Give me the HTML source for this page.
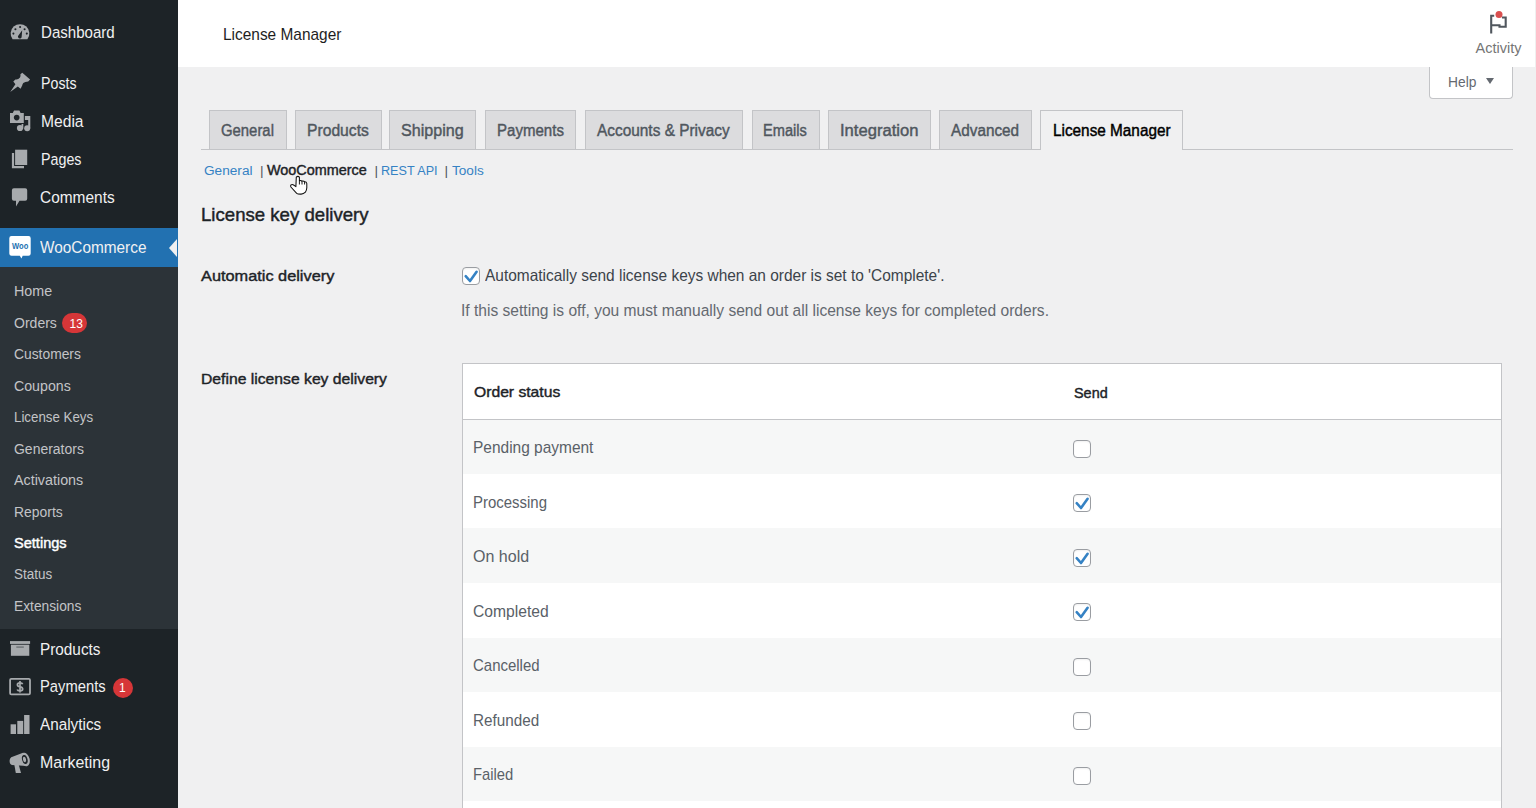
<!DOCTYPE html>
<html><head><meta charset="utf-8"><title>License Manager</title>
<style>
html,body{margin:0;padding:0;width:1536px;height:808px;overflow:hidden;background:#f0f0f1;position:relative;font-family:"Liberation Sans",sans-serif}
.t{position:absolute;line-height:1;white-space:nowrap}
.tab{position:absolute;border:1px solid #c3c4c7;border-bottom:none}
.cb{position:absolute;width:16px;height:16px;border:1px solid #9a9da2;border-radius:4px;box-shadow:inset 0 1px 2px rgba(0,0,0,.06)}
</style></head><body>
<div style="position:absolute;left:0;top:0;width:178px;height:808px;background:#1d2327"></div>
<div style="position:absolute;left:0;top:267px;width:178px;height:362px;background:#2c3338"></div>
<div style="position:absolute;left:0;top:228px;width:178px;height:39px;background:#2271b1"></div>
<div style="position:absolute;left:169.2px;top:238.8px;width:0;height:0;border-top:9.5px solid transparent;border-bottom:9.5px solid transparent;border-right:8.8px solid #f0f0f1"></div>
<div class="t" style="left:41.10px;top:25.45px;font-size:15.3px;color:#f0f0f1;transform:scale(0.9853,1.08);transform-origin:0 12.95px;">Dashboard</div>
<div class="t" style="left:40.60px;top:75.75px;font-size:15.3px;color:#f0f0f1;transform:scale(0.9289,1.08);transform-origin:0 12.95px;">Posts</div>
<div class="t" style="left:40.50px;top:113.85px;font-size:15.3px;color:#f0f0f1;transform:scale(1.0214,1.08);transform-origin:0 12.95px;">Media</div>
<div class="t" style="left:40.50px;top:151.55px;font-size:15.3px;color:#f0f0f1;transform:scale(0.9326,1.08);transform-origin:0 12.95px;">Pages</div>
<div class="t" style="left:40.30px;top:189.55px;font-size:15.3px;color:#f0f0f1;transform:scale(1.0095,1.08);transform-origin:0 12.95px;">Comments</div>
<div class="t" style="left:40.30px;top:240.05px;font-size:15.3px;color:#f0f0f1;transform:scale(1.0047,1.08);transform-origin:0 12.95px;">WooCommerce</div>
<div class="t" style="left:40.40px;top:641.55px;font-size:15.3px;color:#f0f0f1;transform:scale(1.0017,1.08);transform-origin:0 12.95px;">Products</div>
<div class="t" style="left:40.40px;top:679.25px;font-size:15.3px;color:#f0f0f1;transform:scale(0.9662,1.08);transform-origin:0 12.95px;">Payments</div>
<div class="t" style="left:40.00px;top:717.35px;font-size:15.3px;color:#f0f0f1;transform:scale(1.0000,1.08);transform-origin:0 12.95px;">Analytics</div>
<div class="t" style="left:40.40px;top:755.35px;font-size:15.3px;color:#f0f0f1;transform:scale(1.0433,1.08);transform-origin:0 12.95px;">Marketing</div>
<div class="t" style="left:13.60px;top:285.42px;font-size:13.8px;color:#c3c4c7;transform:scale(1.0351,1.08);transform-origin:0 11.68px;">Home</div>
<div class="t" style="left:13.60px;top:316.87px;font-size:13.8px;color:#c3c4c7;transform:scale(1.0167,1.08);transform-origin:0 11.68px;">Orders</div>
<div class="t" style="left:13.60px;top:348.32px;font-size:13.8px;color:#c3c4c7;transform:scale(1.0030,1.08);transform-origin:0 11.68px;">Customers</div>
<div class="t" style="left:13.60px;top:379.77px;font-size:13.8px;color:#c3c4c7;transform:scale(1.0273,1.08);transform-origin:0 11.68px;">Coupons</div>
<div class="t" style="left:13.60px;top:411.22px;font-size:13.8px;color:#c3c4c7;transform:scale(0.9646,1.08);transform-origin:0 11.68px;">License Keys</div>
<div class="t" style="left:13.60px;top:442.67px;font-size:13.8px;color:#c3c4c7;transform:scale(1.0130,1.08);transform-origin:0 11.68px;">Generators</div>
<div class="t" style="left:13.60px;top:474.12px;font-size:13.8px;color:#c3c4c7;transform:scale(1.0373,1.08);transform-origin:0 11.68px;">Activations</div>
<div class="t" style="left:13.60px;top:505.57px;font-size:13.8px;color:#c3c4c7;transform:scale(1.0083,1.08);transform-origin:0 11.68px;">Reports</div>
<div class="t" style="left:13.60px;top:537.10px;font-size:13.7px;color:#ffffff;-webkit-text-stroke:0.4px currentColor;transform:scale(1.0640,1.08);transform-origin:0 11.60px;">Settings</div>
<div class="t" style="left:13.60px;top:568.47px;font-size:13.8px;color:#c3c4c7;transform:scale(0.9769,1.08);transform-origin:0 11.68px;">Status</div>
<div class="t" style="left:13.60px;top:599.92px;font-size:13.8px;color:#c3c4c7;transform:scale(0.9985,1.08);transform-origin:0 11.68px;">Extensions</div>
<div style="position:absolute;left:62px;top:313px;width:25px;height:20px;border-radius:10px;background:#d63638"></div>
<div class="t" style="left:69.50px;top:317.84px;font-size:12px;color:#fff;transform:scale(1.0000,1.08);transform-origin:0 10.16px;">13</div>
<div style="position:absolute;left:112.5px;top:678px;width:20px;height:20px;border-radius:10px;background:#d63638"></div>
<div class="t" style="left:119.00px;top:682.34px;font-size:12px;color:#fff;transform:scale(1.0000,1.08);transform-origin:0 10.16px;">1</div>

<svg style="position:absolute;left:0;top:0" width="178" height="808" viewBox="0 0 178 808">
 <!-- dashboard -->
 <path d="M12.6 39.2 A9.35 9.35 0 1 1 27.4 39.2 Z" fill="#a7aaad"/>
 <g fill="#1d2327"><circle cx="20.1" cy="27" r="1.05"/><circle cx="15.4" cy="29.2" r="1.05"/><circle cx="24.6" cy="29.2" r="1.05"/><circle cx="13.4" cy="33.6" r="1.05"/><circle cx="26.8" cy="33.6" r="1.05"/>
 <path d="M22.2 30.2 L18.6 35.2 A1.9 1.9 0 1 0 21.7 36.3 Z"/></g>
 <!-- pin -->
 <path d="M22.3 72.7 L30.1 79.4 L28.2 81.5 Q25 81.5 23.3 83 Q22.3 84.5 22.3 85.3 L20.6 88.8 L17.8 86.4 L10.2 91.9 L15.4 84.3 L13.3 81.5 L15.4 79.4 Q18 80 20 77.5 Q20.8 76 20.4 74.2 Z" fill="#a7aaad"/>
 <!-- media -->
 <path d="M10 112.9 h2.8 l1.2 -2.4 h5.4 l1.2 2.4 h3.2 v10.1 h-13.8 Z" fill="#a7aaad"/>
 <circle cx="16.7" cy="117.6" r="2.8" fill="#1d2327"/>
 <path d="M24.9 116 H30.3 V128.2 H28.2 V119.9 H24.9 Z" fill="#a7aaad"/>
 <circle cx="27.2" cy="128.2" r="3" fill="#a7aaad"/>
 <rect x="21.6" y="124" width="1.7" height="4.5" fill="#a7aaad"/>
 <circle cx="20" cy="128" r="3.1" fill="#a7aaad"/>
 <!-- pages -->
 <rect x="15.1" y="149.7" width="12.1" height="15.3" fill="#a7aaad"/>
 <path d="M11.9 153 h2.2 v13 h9.9 v2.3 h-12.1 Z" fill="#a7aaad"/>
 <!-- comments -->
 <path d="M13.9 188.3 h11.3 a2 2 0 0 1 2 2 v8.5 a2 2 0 0 1 -2 2 h-5.7 l-3.5 5.6 v-5.6 h-2.1 a2 2 0 0 1 -2 -2 v-8.5 a2 2 0 0 1 2 -2 Z" fill="#a7aaad"/>
 <!-- woo -->
 <path d="M11.5 236.1 h17 a2.2 2.2 0 0 1 2.2 2.2 v15.3 a2.2 2.2 0 0 1 -2.2 2.2 h-5.8 l-1.3 2.6 l-1.6 -2.6 h-8.3 a2.2 2.2 0 0 1 -2.2 -2.2 v-15.3 a2.2 2.2 0 0 1 2.2 -2.2 Z" fill="#fff"/>
 <text x="12.1" y="249.4" font-family="Liberation Sans" font-weight="700" font-size="9.6" fill="#2271b1" textLength="16.2" lengthAdjust="spacingAndGlyphs">Woo</text>
 <!-- products box -->
 <rect x="10" y="641.1" width="20.1" height="2.8" fill="#a7aaad"/>
 <rect x="10.9" y="644.7" width="18.4" height="11.1" fill="#a7aaad"/>
 <rect x="16.3" y="646.3" width="7.5" height="1.6" fill="#74787c"/>
 <!-- payments -->
 <rect x="10.1" y="678.8" width="19.9" height="15.6" rx="1.2" fill="none" stroke="#a7aaad" stroke-width="1.8"/>
 <path d="M22.6 684.2 Q22.3 682.8 20 682.8 Q17.4 682.8 17.4 684.8 Q17.4 686.5 20 686.8 Q22.7 687.1 22.7 689.1 Q22.7 691 20 691 Q17.6 691 17.2 689.6 M20 681.1 V692.4" fill="none" stroke="#a7aaad" stroke-width="1.7"/>
 <!-- analytics -->
 <rect x="10.6" y="724.3" width="5.4" height="9.7" fill="#a7aaad"/>
 <rect x="17.3" y="720.9" width="5.9" height="13.1" fill="#a7aaad"/>
 <rect x="24.1" y="715" width="5.4" height="19" fill="#a7aaad"/>
 <!-- megaphone -->
 <path d="M11.2 757.2 L23 752.8 L26.8 766 L11.8 765 Q9.6 764.2 9.6 761 Q9.6 758.2 11.2 757.2 Z" fill="#a7aaad"/>
 <path d="M14.4 765 L15.8 773 L21 773 L18.8 765 Z" fill="#a7aaad"/>
 <ellipse cx="25.2" cy="759.5" rx="4.4" ry="6.9" transform="rotate(-15 25.2 759.5)" fill="#a7aaad"/>
 <ellipse cx="24.8" cy="759.5" rx="2.7" ry="4.6" transform="rotate(-15 24.8 759.5)" fill="#1d2327"/>
 <ellipse cx="24.5" cy="759.5" rx="1.5" ry="2.8" transform="rotate(-15 24.5 759.5)" fill="#a7aaad"/>
</svg>
<div style="position:absolute;left:178px;top:0;width:1358px;height:67px;background:#fff"></div>
<div style="position:absolute;left:1535px;top:0;width:1px;height:67px;background:#f0f0f0"></div>
<div class="t" style="left:223.25px;top:26.88px;font-size:15.5px;color:#1e1e1e;transform:scale(0.9958,1.08);transform-origin:0 13.12px;">License Manager</div>
<div class="t" style="left:1475.60px;top:41.33px;font-size:14.5px;color:#757575;transform:scale(1.0000,0.96);transform-origin:0 12.27px;">Activity</div>
<svg style="position:absolute;left:1480px;top:5px" width="36" height="32" viewBox="1480 5 36 32">
 <path d="M1491.2 33.4 V15.8 H1494.2 M1491.2 25.2 H1499.5 V26.8 H1505.7 V17.5 H1502" fill="none" stroke="#50575e" stroke-width="2.1"/>
 <circle cx="1499" cy="14.5" r="3.5" fill="#d94f4f"/>
</svg>
<div style="position:absolute;left:1428.8px;top:60px;width:82px;height:37.5px;background:#fff;border:1px solid #c3c4c7;border-top:none;border-radius:0 0 4px 4px"></div>
<div style="position:absolute;left:1429px;top:60px;width:84px;height:7px;background:#fff"></div>
<div class="t" style="left:1448.00px;top:74.95px;font-size:14px;color:#646970;transform:scale(0.9862,0.98);transform-origin:0 11.85px;">Help</div>
<div style="position:absolute;left:1485.5px;top:78px;width:0;height:0;border-left:4px solid transparent;border-right:4px solid transparent;border-top:6.5px solid #646970"></div>
<div style="position:absolute;left:200.5px;top:149px;width:1312.5px;height:1px;background:#c3c4c7"></div>
<div class="tab" style="left:209px;top:110px;width:76.0px;height:38px;background:#dcdcde"></div>
<div class="t" style="left:221.18px;top:122.75px;font-size:15.3px;color:#50575e;-webkit-text-stroke:0.4px currentColor;transform:scale(0.9727,1.1);transform-origin:0 12.95px;">General</div>
<div class="tab" style="left:295px;top:110px;width:84.5px;height:38px;background:#dcdcde"></div>
<div class="t" style="left:307.19px;top:122.75px;font-size:15.3px;color:#50575e;-webkit-text-stroke:0.4px currentColor;transform:scale(1.0250,1.1);transform-origin:0 12.95px;">Products</div>
<div class="tab" style="left:389px;top:110px;width:85.0px;height:38px;background:#dcdcde"></div>
<div class="t" style="left:400.77px;top:122.75px;font-size:15.3px;color:#50575e;-webkit-text-stroke:0.4px currentColor;transform:scale(1.0542,1.1);transform-origin:0 12.95px;">Shipping</div>
<div class="tab" style="left:484.5px;top:110px;width:89.5px;height:38px;background:#dcdcde"></div>
<div class="t" style="left:497.00px;top:122.75px;font-size:15.3px;color:#50575e;-webkit-text-stroke:0.4px currentColor;transform:scale(0.9838,1.1);transform-origin:0 12.95px;">Payments</div>
<div class="tab" style="left:584.5px;top:110px;width:156.5px;height:38px;background:#dcdcde"></div>
<div class="t" style="left:597.20px;top:122.75px;font-size:15.3px;color:#50575e;-webkit-text-stroke:0.4px currentColor;transform:scale(1.0068,1.1);transform-origin:0 12.95px;">Accounts &amp; Privacy</div>
<div class="tab" style="left:751.5px;top:110px;width:66.5px;height:38px;background:#dcdcde"></div>
<div class="t" style="left:763.41px;top:122.75px;font-size:15.3px;color:#50575e;-webkit-text-stroke:0.4px currentColor;transform:scale(0.9565,1.1);transform-origin:0 12.95px;">Emails</div>
<div class="tab" style="left:827.5px;top:110px;width:101.5px;height:38px;background:#dcdcde"></div>
<div class="t" style="left:839.79px;top:122.75px;font-size:15.3px;color:#50575e;-webkit-text-stroke:0.4px currentColor;transform:scale(1.0847,1.1);transform-origin:0 12.95px;">Integration</div>
<div class="tab" style="left:939px;top:110px;width:91.0px;height:38px;background:#dcdcde"></div>
<div class="t" style="left:951.40px;top:122.75px;font-size:15.3px;color:#50575e;-webkit-text-stroke:0.4px currentColor;transform:scale(1.0014,1.1);transform-origin:0 12.95px;">Advanced</div>
<div class="tab" style="left:1040.3px;top:110px;width:140.7px;height:39px;background:#f0f0f1"></div>
<div class="t" style="left:1052.60px;top:122.75px;font-size:15.3px;color:#000;-webkit-text-stroke:0.4px currentColor;transform:scale(1.0017,1.1);transform-origin:0 12.95px;">License Manager</div>
<div class="t" style="left:203.60px;top:163.90px;font-size:13.7px;color:#3582c4;transform:scale(0.9959,1.0);transform-origin:0 11.60px;">General</div>
<div class="t" style="left:260.00px;top:163.90px;font-size:13.7px;color:#50575e;">|</div>
<div class="t" style="left:266.61px;top:163.86px;font-size:13.75px;color:#1d2327;-webkit-text-stroke:0.4px currentColor;transform:scale(1.0479,1.0);transform-origin:0 11.64px;">WooCommerce</div>
<div class="t" style="left:374.50px;top:163.90px;font-size:13.7px;color:#50575e;">|</div>
<div class="t" style="left:381.04px;top:163.90px;font-size:13.7px;color:#3582c4;transform:scale(0.9217,1.0);transform-origin:0 11.60px;">REST API</div>
<div class="t" style="left:444.50px;top:163.90px;font-size:13.7px;color:#50575e;">|</div>
<div class="t" style="left:451.55px;top:163.90px;font-size:13.7px;color:#3582c4;transform:scale(0.9922,1.0);transform-origin:0 11.60px;">Tools</div>
<svg style="position:absolute;left:284px;top:168px" width="32" height="32" viewBox="0 0 32 32">
<path d="M12.3 9.1 Q13.9 7.6 15.4 9.1 V12.6 Q17.5 12.4 18 13.1 Q20 12.9 20.6 13.7 Q22.5 13.6 22.8 15.5 V19.8 Q22.6 22.6 21.4 24.2 Q19.2 26.4 16.6 26.1 Q13.7 26.1 12.7 25.3 L6.9 19 Q6.3 17.6 6.9 17 Q8.2 16.1 9.6 17 L11.9 18.6 Z" fill="#fff" stroke="#111" stroke-width="1.05" stroke-linejoin="round"/>
<path d="M15.4 12.6 V16.5 M18 13.1 V16.5 M20.6 13.7 V16.5" stroke="#000" stroke-width="0.9"/>
</svg>
<div class="t" style="left:200.96px;top:206.96px;font-size:17.3px;color:#1d2327;-webkit-text-stroke:0.4px currentColor;transform:scale(1.0769,1.1);transform-origin:0 14.64px;">License key delivery</div>
<div class="t" style="left:200.90px;top:268.59px;font-size:14.9px;color:#1d2327;-webkit-text-stroke:0.4px currentColor;transform:scale(1.0959,1.02);transform-origin:0 12.61px;">Automatic delivery</div>
<div class="t" style="left:200.96px;top:372.14px;font-size:14.6px;color:#1d2327;-webkit-text-stroke:0.4px currentColor;transform:scale(1.0763,1.02);transform-origin:0 12.36px;">Define license key delivery</div>
<div class="cb" style="left:462px;top:267px;background:#fff"></div>
<svg style="position:absolute;left:462px;top:267px" width="18" height="18" viewBox="0 0 18 18"><path d="M3.7 9.2 L8 14 L14.6 4.8" fill="none" stroke="#3582c4" stroke-width="2.6" stroke-linecap="round" stroke-linejoin="round"/></svg>
<div class="t" style="left:484.50px;top:267.93px;font-size:15.44px;color:#3c434a;transform:scale(1.0011,1.08);transform-origin:0 13.07px;">Automatically send license keys when an order is set to &#39;Complete&#39;.</div>
<div class="t" style="left:461.20px;top:302.64px;font-size:15.55px;color:#646970;transform:scale(1.0026,1.08);transform-origin:0 13.16px;">If this setting is off, you must manually send out all license keys for completed orders.</div>
<div style="position:absolute;left:462px;top:363px;width:1037.5px;height:460px;background:#fff;border:1px solid #c3c4c7"></div>
<div class="t" style="left:473.79px;top:385.10px;font-size:14.53px;color:#1d2327;-webkit-text-stroke:0.4px currentColor;transform:scale(1.0800,1.04);transform-origin:0 12.30px;">Order status</div>
<div class="t" style="left:1073.80px;top:385.55px;font-size:14px;color:#1d2327;-webkit-text-stroke:0.4px currentColor;transform:scale(1.0303,1.04);transform-origin:0 11.85px;">Send</div>
<div style="position:absolute;left:463px;top:419.30px;width:1037.5px;height:54.55px;background:#f6f7f7"></div>
<div class="t" style="left:473.40px;top:440.11px;font-size:15.34px;color:#5a6168;transform:scale(1.0092,1.08);transform-origin:0 12.99px;">Pending payment</div>
<div class="cb" style="left:1073px;top:439.7px;background:#fff"></div>
<div style="position:absolute;left:463px;top:473.85px;width:1037.5px;height:54.55px;background:#fff"></div>
<div class="t" style="left:473.41px;top:494.66px;font-size:15.34px;color:#5a6168;transform:scale(0.9760,1.08);transform-origin:0 12.99px;">Processing</div>
<div class="cb" style="left:1073px;top:494.25px;background:#fff"></div>
<svg style="position:absolute;left:1073px;top:494.25px" width="18" height="18" viewBox="0 0 18 18"><path d="M3.7 9.2 L8 14 L14.6 4.8" fill="none" stroke="#3582c4" stroke-width="2.6" stroke-linecap="round" stroke-linejoin="round"/></svg>
<div style="position:absolute;left:463px;top:528.40px;width:1037.5px;height:54.55px;background:#f6f7f7"></div>
<div class="t" style="left:473.38px;top:549.21px;font-size:15.34px;color:#5a6168;transform:scale(1.0453,1.08);transform-origin:0 12.99px;">On hold</div>
<div class="cb" style="left:1073px;top:548.8px;background:#fff"></div>
<svg style="position:absolute;left:1073px;top:548.8px" width="18" height="18" viewBox="0 0 18 18"><path d="M3.7 9.2 L8 14 L14.6 4.8" fill="none" stroke="#3582c4" stroke-width="2.6" stroke-linecap="round" stroke-linejoin="round"/></svg>
<div style="position:absolute;left:463px;top:582.95px;width:1037.5px;height:54.55px;background:#fff"></div>
<div class="t" style="left:473.39px;top:603.76px;font-size:15.34px;color:#5a6168;transform:scale(1.0216,1.08);transform-origin:0 12.99px;">Completed</div>
<div class="cb" style="left:1073px;top:603.35px;background:#fff"></div>
<svg style="position:absolute;left:1073px;top:603.35px" width="18" height="18" viewBox="0 0 18 18"><path d="M3.7 9.2 L8 14 L14.6 4.8" fill="none" stroke="#3582c4" stroke-width="2.6" stroke-linecap="round" stroke-linejoin="round"/></svg>
<div style="position:absolute;left:463px;top:637.50px;width:1037.5px;height:54.55px;background:#f6f7f7"></div>
<div class="t" style="left:473.41px;top:658.31px;font-size:15.34px;color:#5a6168;transform:scale(0.9765,1.08);transform-origin:0 12.99px;">Cancelled</div>
<div class="cb" style="left:1073px;top:657.9px;background:#fff"></div>
<div style="position:absolute;left:463px;top:692.05px;width:1037.5px;height:54.55px;background:#fff"></div>
<div class="t" style="left:473.40px;top:712.86px;font-size:15.34px;color:#5a6168;transform:scale(0.9955,1.08);transform-origin:0 12.99px;">Refunded</div>
<div class="cb" style="left:1073px;top:712.4499999999999px;background:#fff"></div>
<div style="position:absolute;left:463px;top:746.60px;width:1037.5px;height:54.55px;background:#f6f7f7"></div>
<div class="t" style="left:473.41px;top:767.41px;font-size:15.34px;color:#5a6168;transform:scale(0.9634,1.08);transform-origin:0 12.99px;">Failed</div>
<div class="cb" style="left:1073px;top:766.9999999999999px;background:#fff"></div>
<div style="position:absolute;left:463px;top:419px;width:1037.5px;height:1px;background:#c3c4c7"></div>
</body></html>
